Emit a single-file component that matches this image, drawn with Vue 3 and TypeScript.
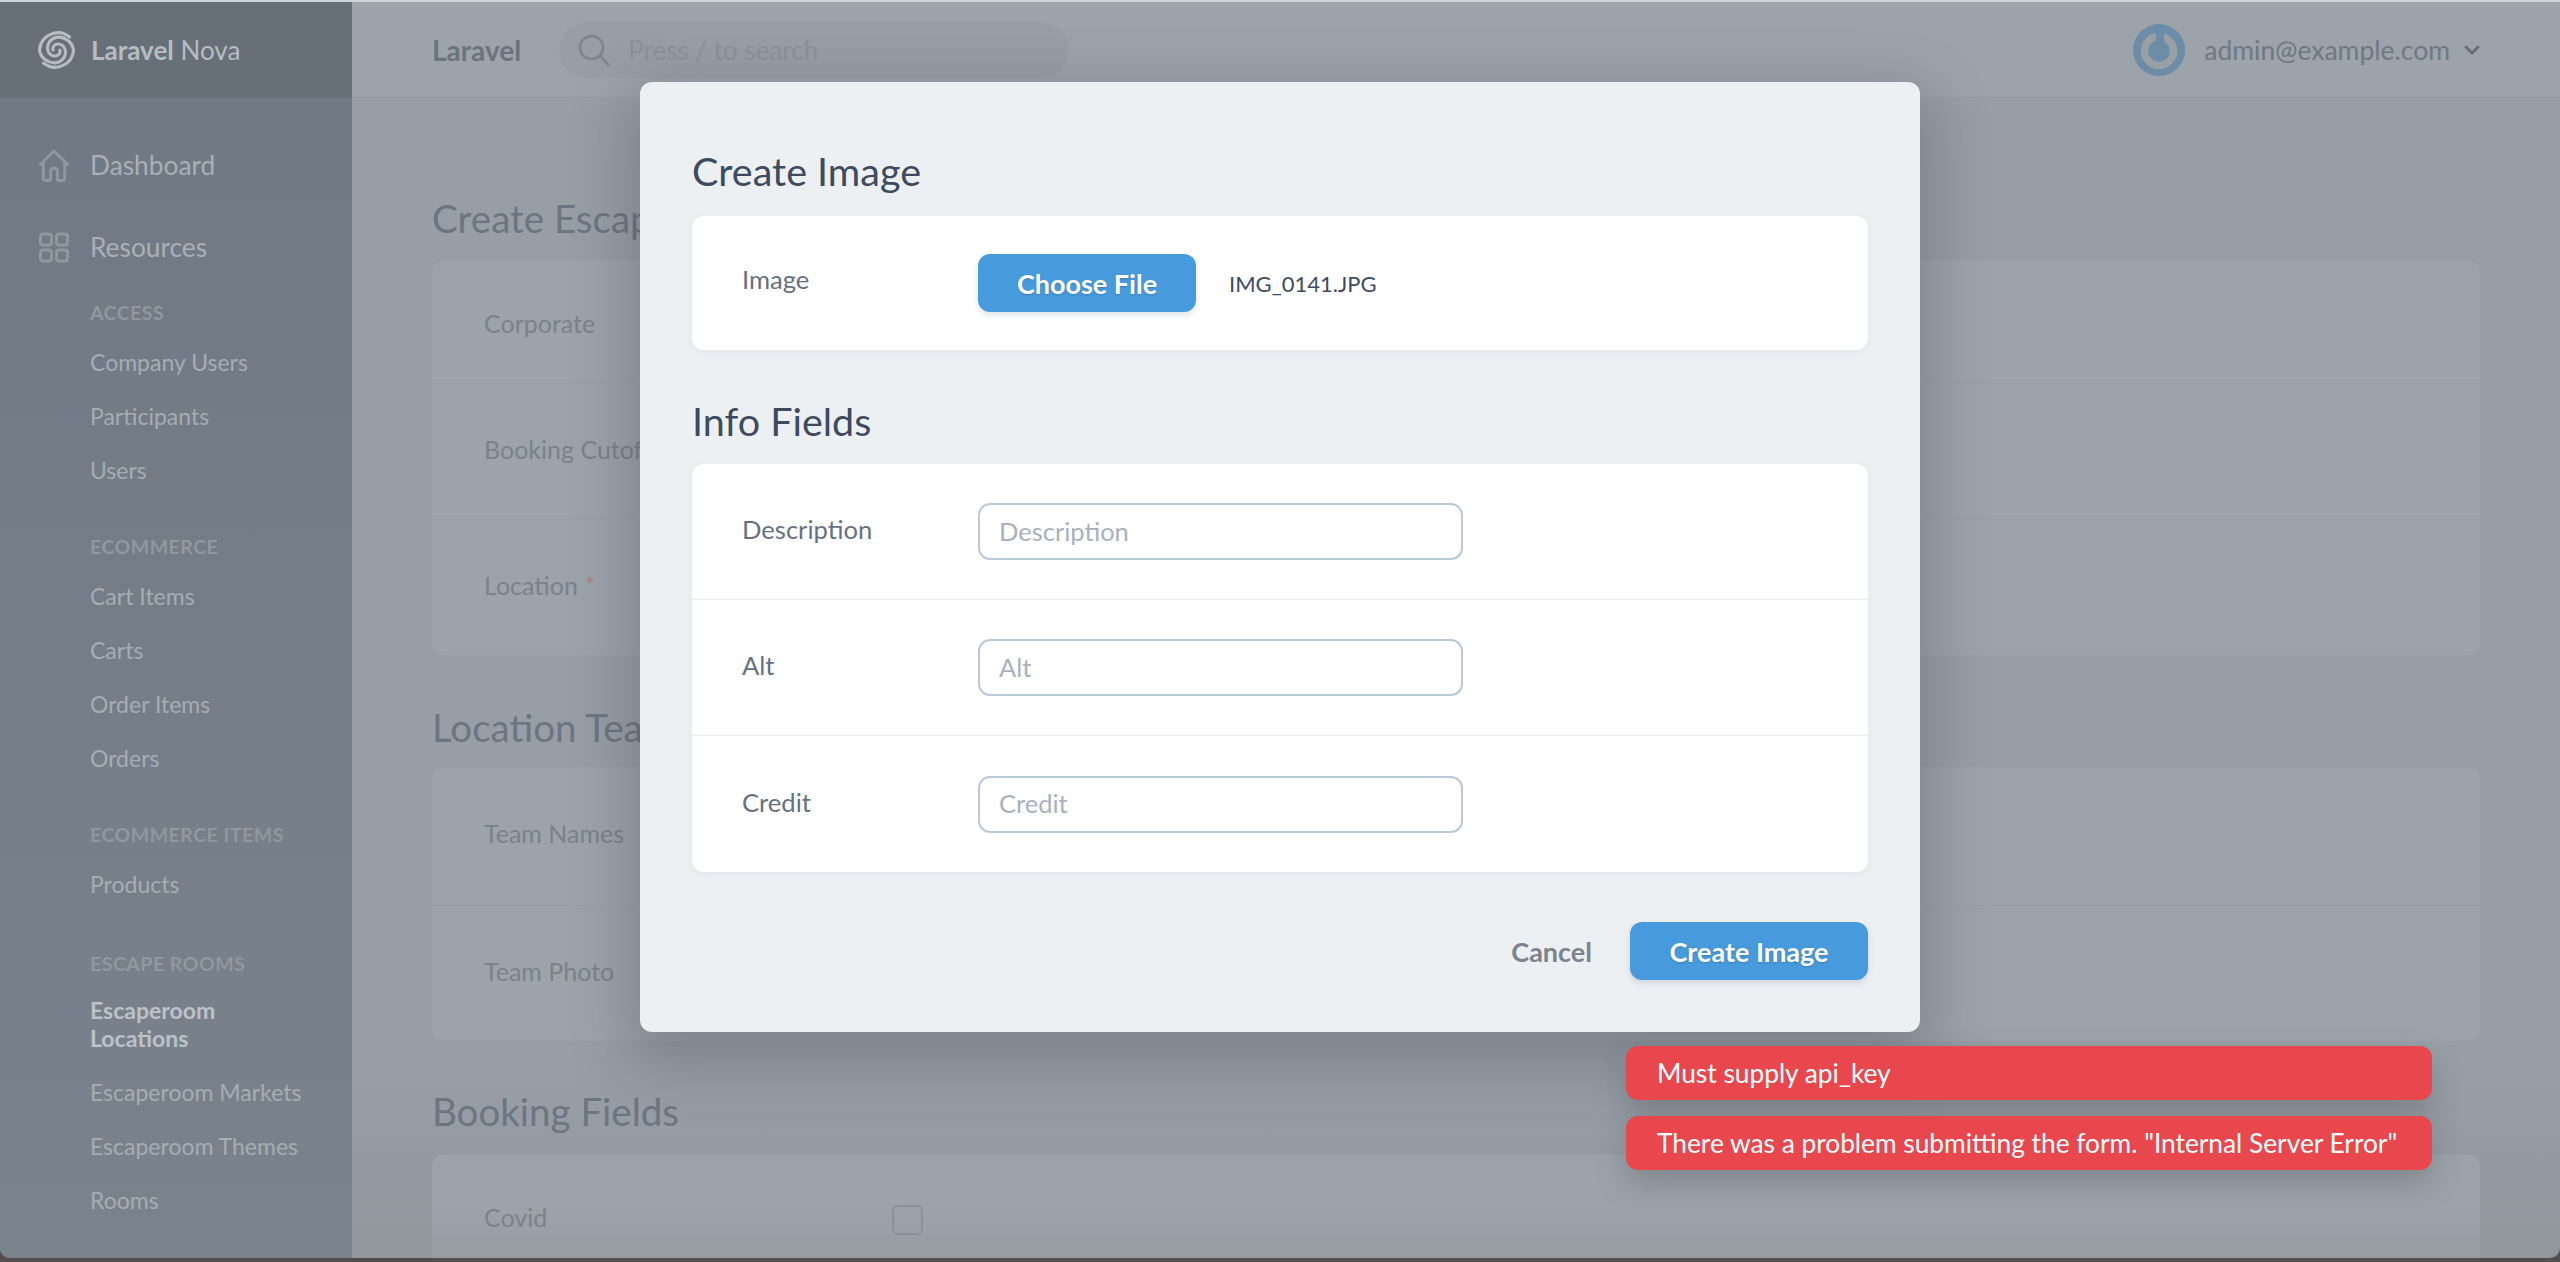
<script setup lang="ts">
interface Group { title: string; items: string[] }
const groups: Group[] = [
  { title: 'Access', items: ['Company Users', 'Participants', 'Users'] },
  { title: 'Ecommerce', items: ['Cart Items', 'Carts', 'Order Items', 'Orders'] },
  { title: 'Ecommerce Items', items: ['Products'] },
  { title: 'Escape Rooms', items: ['Escaperoom Locations', 'Escaperoom Markets', 'Escaperoom Themes', 'Rooms'] },
]
const activeItem = 'Escaperoom Locations'
const infoFields = ['Description', 'Alt', 'Credit']
const toasts = ['Must supply api_key', 'There was a problem submitting the form. "Internal Server Error"']
</script>

<template>
  <div class="screen">
    <div class="window">
      <aside class="sidebar">
        <div class="brand">
          <svg class="logo" viewBox="0 0 38 40" fill="none" stroke="currentColor" stroke-width="3.2" stroke-linecap="round">
            <path d="M32.400 6.600A19 19 0 0 0 1.500 20A15.500 15.500 0 0 0 19 33A11 11 0 0 0 28 20A7.500 7.500 0 0 0 19 14A5 5 0 0 0 15.500 20" />
            <path transform="rotate(180 19 20)" d="M32.400 6.600A19 19 0 0 0 1.500 20A15.500 15.500 0 0 0 19 33A11 11 0 0 0 28 20A7.500 7.500 0 0 0 19 14A5 5 0 0 0 15.500 20" />
          </svg>
          <span class="brand-text"><b>Laravel</b> Nova</span>
        </div>
        <nav class="nav">
          <div class="nav-main">
            <svg class="nav-icon" viewBox="0 0 32 34" fill="none" stroke="currentColor" stroke-width="3" stroke-linejoin="round" stroke-linecap="round">
              <path d="M2 16 16 2l14 14" />
              <path d="M5 14v16a2.500 2.500 0 0 0 2.500 2.500H11a1.500 1.500 0 0 0 1.500-1.500v-8a3.500 3.500 0 0 1 7 0v8a1.500 1.500 0 0 0 1.500 1.500h3.500A2.500 2.500 0 0 0 27 30V14" />
            </svg>
            <span>Dashboard</span>
          </div>
          <div class="nav-main">
            <svg class="nav-icon" viewBox="0 0 32 32" fill="none" stroke="currentColor" stroke-width="3" stroke-linejoin="round">
              <rect x="2.500" y="2.500" width="11" height="11" rx="2.500" />
              <rect x="18.500" y="2.500" width="11" height="11" rx="2.500" />
              <rect x="2.500" y="18.500" width="11" height="11" rx="2.500" />
              <rect x="18.500" y="18.500" width="11" height="11" rx="2.500" />
            </svg>
            <span>Resources</span>
          </div>
          <section v-for="group in groups" :key="group.title" class="nav-group">
            <h4 class="nav-title">{{ group.title }}</h4>
            <a
              v-for="item in group.items"
              :key="item"
              class="nav-item"
              :class="{ active: item === activeItem }"
            >{{ item }}</a>
          </section>
        </nav>
      </aside>

      <div class="main">
        <header class="topbar">
          <span class="app-name">Laravel</span>
          <div class="search">
            <svg class="search-icon" viewBox="0 0 32 32" fill="none" stroke="currentColor" stroke-width="2.600" stroke-linecap="round">
              <circle cx="13.500" cy="13.500" r="11.500" />
              <path d="m22 22 8 8.500" />
            </svg>
            <span>Press / to search</span>
          </div>
          <div class="user">
            <div class="avatar">
              <svg viewBox="0 0 52 52" fill="none">
                <circle cx="26" cy="27" r="14.500" stroke="#98a0a6" stroke-width="7.500" />
                <path d="M27 6v19" stroke="#6c8ca7" stroke-width="8.500" stroke-linecap="round" />
              </svg>
            </div>
            <span class="user-email">admin@example.com</span>
            <svg class="chevron" viewBox="0 0 16 10" fill="none" stroke="currentColor" stroke-width="3" stroke-linecap="round" stroke-linejoin="round">
              <path d="m2 2 6 6 6-6" />
            </svg>
          </div>
        </header>

        <main class="content">
          <h1 class="page-title first">Create Escaperoom Location</h1>
          <div class="panel">
            <div class="panel-row short"><label>Corporate</label></div>
            <div class="panel-row"><label>Booking Cutoff</label></div>
            <div class="panel-row"><label>Location <i class="req">*</i></label></div>
          </div>
          <h1 class="page-title team">Location Team</h1>
          <div class="panel">
            <div class="panel-row tall"><label>Team Names</label></div>
            <div class="panel-row"><label>Team Photo</label></div>
          </div>
          <h1 class="page-title booking">Booking Fields</h1>
          <div class="panel open">
            <div class="panel-row covid">
              <label>Covid</label>
              <span class="checkbox"></span>
            </div>
          </div>
        </main>
      </div>

      <div class="modal">
        <h2 class="modal-title">Create Image</h2>
        <div class="card file-card">
          <label class="field-label image-label">Image</label>
          <button class="btn" type="button">Choose File</button>
          <span class="file-name">IMG_0141.JPG</span>
        </div>
        <h2 class="modal-title second">Info Fields</h2>
        <div class="card">
          <div v-for="field in infoFields" :key="field" class="field-row">
            <label class="field-label">{{ field }}</label>
            <input class="input" type="text" :placeholder="field" />
          </div>
        </div>
        <div class="modal-actions">
          <button class="cancel" type="button">Cancel</button>
          <button class="btn wide" type="button">Create Image</button>
        </div>
      </div>

      <div class="toasts">
        <div v-for="toast in toasts" :key="toast" class="toast">{{ toast }}</div>
      </div>
    </div>
  </div>
</template>

<style>
html, body { margin: 0; background: #4a4644; overflow: hidden; }
</style>

<style scoped>
* { box-sizing: border-box; }
.screen {
  width: 2560px;
  height: 1262px;
  padding: 2px 0 4px;
  background: linear-gradient(#cdd3d8 0 2px, #544f4e 2px);
  overflow: hidden;
  font-family: Lato, "Noto Sans", sans-serif;
}
.window {
  position: relative;
  display: flex;
  height: 100%;
  border-radius: 0 0 10px 10px;
  overflow: hidden;
  background: linear-gradient(#979ea6 85%, #92979e);
}
.sidebar {
  flex: 0 0 352px;
  background: linear-gradient(#6f7883, #7a838d);
  color: #b3bac0;
}
.brand {
  display: flex;
  align-items: center;
  height: 96px;
  padding-left: 38px;
  background: #676f79;
  color: #b6bcc2;
}
.logo { width: 37px; height: 40px; margin-right: 16px; flex: none; }
.brand-text { font-size: 26px; }
.brand-text b { font-weight: 700; }
.nav { padding-top: 26px; }
.nav-main {
  display: flex;
  align-items: center;
  height: 82px;
  padding-left: 38px;
  font-size: 26.300px;
  color: #a9b0b7;
}
.nav-icon { width: 32px; height: 33px; margin-right: 20px; flex: none; color: #8f98a0; }
.nav-group { padding-left: 90px; }
.nav-group:first-of-type { margin-top: 3px; }
.nav-title {
  margin: 28px 0 0;
  height: 44px;
  line-height: 44px;
  font-size: 19.500px;
  font-weight: 700;
  letter-spacing: 0.5px;
  text-transform: uppercase;
  color: #8f98a0;
}
.nav-group:first-of-type .nav-title { margin-top: 0; }
.nav-group:last-child .nav-title { line-height: 49px; }
.nav-item {
  display: block;
  padding: 13px 0;
  line-height: 28px;
  font-size: 23px;
  color: #a5adb4;
}
.nav-item.active { max-width: 180px; font-weight: 700; color: #bcc2c8; }
.main { flex: 1; min-width: 0; display: flex; flex-direction: column; }
.topbar {
  display: flex;
  align-items: center;
  height: 96px;
  flex: none;
  padding: 0 80px;
  background: #9ca3aa;
  border-bottom: 1px solid #969da5;
}
.app-name { font-size: 28px; font-weight: 700; color: #6a737e; }
.search {
  display: flex;
  align-items: center;
  width: 510px;
  height: 56px;
  margin-left: 38px;
  padding-left: 19px;
  border-radius: 28px;
  background: #979ea6;
  font-size: 26px;
  color: #8a929b;
}
.search-icon { width: 32px; height: 32px; margin-right: 18px; color: #7d868f; }
.user { display: flex; align-items: center; margin-left: auto; }
.avatar { width: 52px; height: 52px; border-radius: 50%; background: #6c8ca7; }
.avatar svg { display: block; }
.user-email { margin-left: 19px; font-size: 26.500px; color: #6f7884; }
.chevron { width: 16px; height: 10px; margin-left: 14px; color: #656e79; }
.content { flex: 1; padding: 98px 80px 0; overflow: hidden; }
.page-title {
  margin: 50px 0 20px;
  line-height: 44px;
  font-size: 38.500px;
  font-weight: 400;
  color: #6c7582;
}
.page-title.first { margin-top: 0; }
.page-title.team { margin-bottom: 18px; }
.page-title.booking { margin: 48px 0 22px; }
.panel {
  border-radius: 12px;
  background: #9ca3aa;
}
.panel.open {
  height: 130px;
  border-radius: 12px 12px 0 0;
  background: linear-gradient(#9ca3aa 40%, #94989f);
}
.panel-row {
  display: flex;
  align-items: center;
  height: 136px;
  padding: 0 52px;
  font-size: 25px;
  color: #7a828c;
  border-top: 1px solid #969da5;
}
.panel-row label { padding-bottom: 6px; }
.panel-row:first-child { border-top: 0; }
.panel-row.short { height: 123px; padding-top: 9px; }
.panel-row.tall { height: 138px; }
.panel-row.covid { height: 130px; }
.panel-row.covid label { flex: 0 0 408px; }
.req { font-style: normal; color: #a9837f; }
.checkbox {
  width: 31px;
  height: 30px;
  border: 2px solid #8a939c;
  border-radius: 6px;
}
.modal {
  position: absolute;
  left: 640px;
  top: 80px;
  width: 1280px;
  height: 950px;
  padding: 67px 52px 0;
  border-radius: 12px;
  background: #edf0f3;
  box-shadow: 0 20px 60px 10px rgba(60, 66, 76, 0.32);
}
.modal-title {
  margin: 0 0 23px;
  line-height: 44px;
  font-size: 39.500px;
  font-weight: 400;
  color: #3d4b5f;
}
.modal-title.second { margin: 49px 0 21px; }
.card {
  border-radius: 12px;
  background: #fff;
  box-shadow: 0 2px 6px rgba(60, 70, 90, 0.06);
}
.file-card { display: flex; align-items: center; height: 134px; padding: 0 50px; }
.field-label { flex: 0 0 236px; padding-bottom: 5px; font-size: 25.600px; color: #66717f; }
.image-label { padding-bottom: 8px; }
.btn {
  height: 58px;
  padding: 0;
  width: 218px;
  border: 0;
  border-radius: 12px;
  background: #479bdd;
  box-shadow: 0 3px 6px rgba(60, 80, 110, 0.16);
  color: #fff;
  font: 700 27px Lato, "Noto Sans", sans-serif;
  text-shadow: 0 1px 2px rgba(40, 60, 90, 0.3);
}
.btn.wide { width: 238px; }
.file-name { margin-left: 33px; font-size: 22px; color: #3f4c60; }
.field-row {
  display: flex;
  align-items: center;
  height: 136px;
  padding: 0 50px;
  border-top: 1px solid #e9edf1;
}
.field-row:first-child { border-top: 0; height: 135px; }
.field-row:last-child { height: 137px; }
.input {
  width: 485px;
  height: 57px;
  padding: 0 19px 2px;
  border: 2px solid #bac9d7;
  border-radius: 12px;
  background: #fff;
  outline: 0;
  font: 400 25.500px Lato, "Noto Sans", sans-serif;
  color: #3d4b5f;
}
.input::placeholder { color: #a8b1bc; opacity: 1; }
.modal-actions {
  display: flex;
  justify-content: flex-end;
  align-items: center;
  margin-top: 50px;
}
.cancel {
  margin-right: 38px;
  padding: 0;
  border: 0;
  background: none;
  color: #7b838d;
  font: 700 27px Lato, "Noto Sans", sans-serif;
}
.toasts {
  position: absolute;
  left: 1626px;
  top: 1044px;
  display: flex;
  flex-direction: column;
  gap: 16px;
  width: 806px;
}
.toast {
  height: 54px;
  line-height: 54px;
  padding-left: 31px;
  border-radius: 12px;
  background: #e7474d;
  box-shadow: 0 14px 30px rgba(60, 66, 76, 0.28);
  color: #fff;
  font-size: 26.300px;
  white-space: nowrap;
}
</style>
